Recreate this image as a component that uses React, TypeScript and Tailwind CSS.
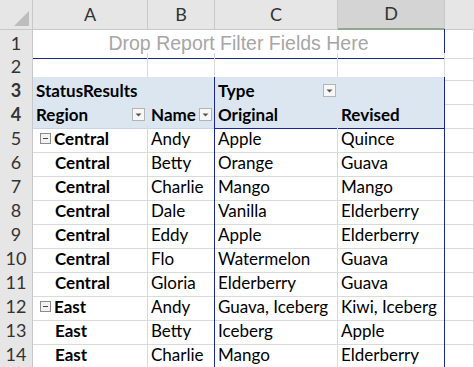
import React from 'react';

const GRID = 'grid grid-cols-[33px_115px_67px_123px_107px_1fr]';
const CELL = 'border-r border-b border-[#dadada] px-[3px] whitespace-nowrap overflow-hidden flex items-center';

const rows = [
  { n: 5, region: 'Central', toggle: true, name: 'Andy', orig: 'Apple', rev: 'Quince' },
  { n: 6, region: 'Central', name: 'Betty', orig: 'Orange', rev: 'Guava' },
  { n: 7, region: 'Central', name: 'Charlie', orig: 'Mango', rev: 'Mango' },
  { n: 8, region: 'Central', name: 'Dale', orig: 'Vanilla', rev: 'Elderberry' },
  { n: 9, region: 'Central', name: 'Eddy', orig: 'Apple', rev: 'Elderberry' },
  { n: 10, region: 'Central', name: 'Flo', orig: 'Watermelon', rev: 'Guava' },
  { n: 11, region: 'Central', name: 'Gloria', orig: 'Elderberry', rev: 'Guava' },
  { n: 12, region: 'East', toggle: true, name: 'Andy', orig: 'Guava, Iceberg', rev: 'Kiwi, Iceberg' },
  { n: 13, region: 'East', name: 'Betty', orig: 'Iceberg', rev: 'Apple' },
  { n: 14, region: 'East', name: 'Charlie', orig: 'Mango', rev: 'Elderberry' },
];

function RowNum({ n }: { n?: number }) {
  return (
    <div className="bg-[#e6e6e6] border-r border-b border-[#c8c8c8] flex items-center justify-center text-[#333] text-[18px]">
      {n}
    </div>
  );
}

function DropBtn() {
  return (
    <span className="ml-auto w-[13px] h-[13px] border border-[#b4b4b4] bg-[#f7f7f7] flex items-center justify-center shrink-0">
      <svg width="7" height="4" viewBox="0 0 7 4">
        <path d="M0.5 0.5 L6.5 0.5 L3.5 3.5 Z" fill="#555" />
      </svg>
    </span>
  );
}

function Toggle() {
  return (
    <span className="w-[11px] h-[11px] border border-[#8c8c8c] bg-[#f2f2f2] flex items-center justify-center mr-[3px] shrink-0">
      <span className="w-[5px] h-px bg-[#444]" />
    </span>
  );
}

export default function App() {
  return (
    <div className="w-[474px] h-[367px] overflow-hidden bg-white text-[17px] text-black font-['Lato','Noto_Sans',sans-serif]">
      {/* column headers */}
      <div className={`${GRID} h-[29px] text-[#333] text-[18px]`}>
        <div className="bg-[#e6e6e6] border-r border-b border-[#c8c8c8] relative">
          <svg className="absolute right-[3px] bottom-[3px]" width="15" height="15" viewBox="0 0 15 15">
            <path d="M15 0 L15 15 L0 15 Z" fill="#bdbdbd" />
          </svg>
        </div>
        {['A', 'B', 'C'].map((c) => (
          <div key={c} className="bg-[#e6e6e6] border-r border-b border-[#c8c8c8] flex items-end justify-center pb-[1px]">
            {c}
          </div>
        ))}
        <div className="bg-[#d4d4d4] border-r border-[#c8c8c8] border-b-2 border-b-[#8fa88f] flex items-end justify-center pb-[1px]">
          D
        </div>
        <div className="bg-[#e6e6e6] border-b border-[#c8c8c8]" />
      </div>

      {/* row 1 */}
      <div className={`${GRID} h-[24px]`}>
        <RowNum n={1} />
        <div className="col-span-4 border-r border-b border-[#1b2790] flex items-center justify-center text-[#a6a6a6] font-['Liberation_Sans',sans-serif] text-[19.5px]">
          Drop Report Filter Fields Here
        </div>
        <div className={CELL} />
      </div>

      {/* row 2 */}
      <div className={`${GRID} h-[24px]`}>
        <RowNum n={2} />
        <div className={CELL} />
        <div className={CELL} />
        <div className={`${CELL} border-b-[#1b2790]`} />
        <div className={`${CELL} border-b-[#1b2790]`} />
        <div className={CELL} />
      </div>

      {/* row 3 */}
      <div className={`${GRID} h-[24px] font-bold`}>
        <RowNum n={3} />
        <div className="col-span-2 bg-[#dce6f1] border-r border-b border-[#1b2790] px-[3px] flex items-center">
          StatusResults
        </div>
        <div className="bg-[#dce6f1] border-b border-[#dce6f1] px-[3px] pr-[2px] flex items-center">
          Type
          <DropBtn />
        </div>
        <div className="bg-[#dce6f1] border-r border-b border-r-[#1b2790] border-b-[#dce6f1]" />
        <div className={CELL} />
      </div>

      {/* row 4 */}
      <div className={`${GRID} h-[24px] font-bold`}>
        <RowNum n={4} />
        <div className="bg-[#dce6f1] border-r border-b border-r-[#dce6f1] border-b-[#c9d5e6] px-[3px] pr-[2px] flex items-center">
          Region
          <DropBtn />
        </div>
        <div className="bg-[#dce6f1] border-r border-b border-r-[#1b2790] border-b-[#c9d5e6] px-[3px] pr-[2px] flex items-center">
          Name
          <DropBtn />
        </div>
        <div className="bg-[#dce6f1] border-b border-[#1b2790] px-[3px] flex items-center">Original</div>
        <div className="bg-[#dce6f1] border-r border-b border-[#1b2790] px-[3px] flex items-center">Revised</div>
        <div className={CELL} />
      </div>

      {rows.map((r) => (
        <div key={r.n} className={`${GRID} h-[24px]`}>
          <RowNum n={r.n} />
          <div className={`${CELL} font-bold ${r.toggle ? 'pl-[7px]' : 'pl-[22px]'}`}>
            {r.toggle && <Toggle />}
            {r.region}
          </div>
          <div className={`${CELL} border-r-[#1b2790]`}>{r.name}</div>
          <div className={CELL}>{r.orig}</div>
          <div className={`${CELL} border-r-[#1b2790]`}>{r.rev}</div>
          <div className={CELL} />
        </div>
      ))}

      {/* row 15 (cut off at the bottom edge) */}
      <div className={`${GRID} h-[24px]`}>
        <RowNum />
        <div className={CELL} />
        <div className={`${CELL} border-r-[#1b2790]`} />
        <div className={CELL} />
        <div className={`${CELL} border-r-[#1b2790]`} />
        <div className={CELL} />
      </div>
    </div>
  );
}
